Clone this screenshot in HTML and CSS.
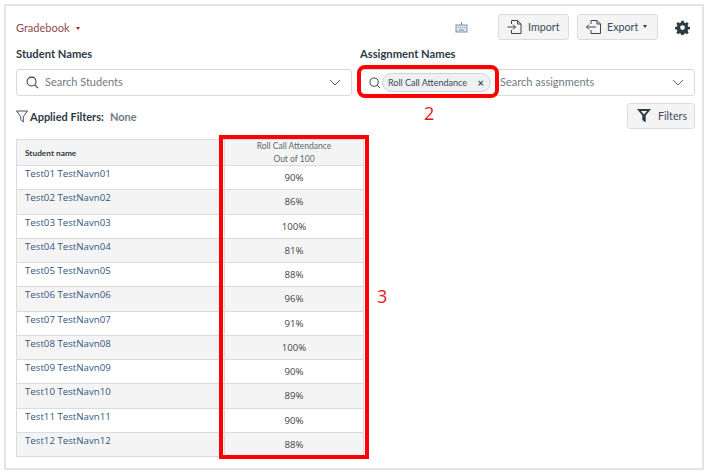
FILE: index.html
```html
<!DOCTYPE html>
<html lang="en">
<head>
    <meta charset="UTF-8">
    <title>Gradebook</title>
    <link rel="stylesheet" href="styles.css">
</head>
<body>

    <div class="frame">
        <!-- Top bar -->
        <div class="topbar">
            <div class="crumb">Gradebook <span class="caret"></span></div>
            <div class="actions">
                <svg class="kbd-icon" width="13" height="13" viewBox="0 0 13 13" fill="none" stroke="#7d92ab" stroke-width="1">
                    <rect x="1" y="4" width="11" height="7" fill="#dfe6ee"/>
                    <path d="M6.5 4V1M3 6.5h1M5 6.5h1M7 6.5h1M9 6.5h1M4 9h5"/>
                </svg>
                <div class="btn btn-import">
                    <svg width="16" height="16" viewBox="0 0 16 16" fill="none" stroke="#444" stroke-width="1">
                        <path d="M4.5 5V1.5h6l3.5 3.5v9.500H4.500V11M10.500 1.500V5H14M.5 8h8M6 5.500 8.500 8 6 10.500"/>
                    </svg>
                    <span>Import</span>
                </div>
                <div class="btn btn-export">
                    <svg width="16" height="16" viewBox="0 0 16 16" fill="none" stroke="#444" stroke-width="1">
                        <path d="M5 5V1.500h6l3.500 3.500v9.500H5V11M11 1.500V5h3.500M10 8H.5M3 5.500.5 8 3 10.500"/>
                    </svg>
                    <span>Export</span>
                    <span class="caret caret-dark"></span>
                </div>
                <svg class="gear" width="15" height="15" viewBox="0 0 24 24" fill="#2d3b45">
                    <path fill-rule="evenodd" d="M13.900 1l.5 3a8.500 8.500 0 0 1 2.300 1l2.500-1.800 2.700 2.700-1.800 2.500a8.500 8.500 0 0 1 1 2.300l3 .5v3.600l-3 .5a8.500 8.500 0 0 1-1 2.300l1.800 2.500-2.700 2.700-2.500-1.800a8.500 8.500 0 0 1-2.300 1l-.5 3h-3.800l-.5-3a8.500 8.500 0 0 1-2.300-1l-2.500 1.800-2.700-2.700 1.800-2.500a8.500 8.500 0 0 1-1-2.300l-3-.5v-3.600l3-.5a8.500 8.500 0 0 1 1-2.300L2.100 5.900l2.700-2.700 2.500 1.800a8.500 8.500 0 0 1 2.300-1l.5-3zM12 8.200a3.800 3.800 0 1 0 0 7.600 3.800 3.800 0 0 0 0-7.600z"/>
                </svg>
            </div>
        </div>

        <!-- Filters -->
        <div class="filter-row">
            <div class="filter">
                <div class="filter-label">Student Names</div>
                <div class="select">
                    <svg class="search" width="13" height="13" viewBox="0 0 14 14" fill="none" stroke="#2d3b45" stroke-width="1.100">
                        <circle cx="6" cy="6" r="4.800"/><path d="M9.500 9.500 13 13"/>
                    </svg>
                    <span class="placeholder">Search Students</span>
                    <svg class="chevron" width="12" height="7" viewBox="0 0 12 7" fill="none" stroke="#556572" stroke-width="1"><path d="M1 1l5 5 5-5"/></svg>
                </div>
            </div>
            <div class="filter">
                <div class="filter-label">Assignment Names</div>
                <div class="select select-tags">
                    <svg class="search" width="12" height="12" viewBox="0 0 14 14" fill="none" stroke="#2d3b45" stroke-width="1.100">
                        <circle cx="6" cy="6" r="4.800"/><path d="M9.500 9.500 13 13"/>
                    </svg>
                    <span class="tag">Roll Call Attendance <b class="tag-x">&times;</b></span>
                    <span class="placeholder">Search assignments</span>
                    <svg class="chevron" width="12" height="7" viewBox="0 0 12 7" fill="none" stroke="#556572" stroke-width="1"><path d="M1 1l5 5 5-5"/></svg>
                </div>
            </div>
        </div>

        <div class="applied-row">
            <div class="applied">
                <svg width="12" height="13" viewBox="0 0 12 13" fill="none" stroke="#2d3b45" stroke-width=".9"><path d="M.5 1h11L7.300 6.500V12L4.700 9.500v-3z"/></svg>
                <strong>Applied Filters:</strong> <span class="none">None</span>
            </div>
            <div class="btn btn-filters">
                <svg width="14" height="15" viewBox="0 0 14 15" fill="#2d3b45"><path fill-rule="evenodd" d="M0 1h14L8.700 7.500V14.500L5.300 12V7.500zM4 3l3 3.500L10 3z"/></svg>
                <span>Filters</span>
            </div>
        </div>

        <!-- Tabela -->
        <div class="table-wrap">
            <table class="grades">
                <thead>
                    <tr>
                        <th class="col-name">Student name</th>
                        <th class="col-grade">Roll Call Attendance<br>Out of 100</th>
                    </tr>
                </thead>
                <tbody>
                    <tr><td><a>Test01 TestNavn01</a></td><td class="grade">90%</td></tr>
                    <tr><td><a>Test02 TestNavn02</a></td><td class="grade">86%</td></tr>
                    <tr><td><a>Test03 TestNavn03</a></td><td class="grade">100%</td></tr>
                    <tr><td><a>Test04 TestNavn04</a></td><td class="grade">81%</td></tr>
                    <tr><td><a>Test05 TestNavn05</a></td><td class="grade">88%</td></tr>
                    <tr><td><a>Test06 TestNavn06</a></td><td class="grade">96%</td></tr>
                    <tr><td><a>Test07 TestNavn07</a></td><td class="grade">91%</td></tr>
                    <tr><td><a>Test08 TestNavn08</a></td><td class="grade">100%</td></tr>
                    <tr><td><a>Test09 TestNavn09</a></td><td class="grade">90%</td></tr>
                    <tr><td><a>Test10 TestNavn10</a></td><td class="grade">89%</td></tr>
                    <tr><td><a>Test11 TestNavn11</a></td><td class="grade">90%</td></tr>
                    <tr><td><a>Test12 TestNavn12</a></td><td class="grade">88%</td></tr>
                </tbody>
            </table>
        </div>

        <!-- Marcações vermelhas por cima da tela -->
        <div class="mark mark-tag"></div>
        <div class="mark-num num-2">2</div>
        <div class="mark mark-col"></div>
        <div class="mark-num num-3">3</div>
    </div>

</body>
</html>
```

FILE: styles.css
```css
/* General */
html, body {
    margin: 0;
    padding: 0;
    background-color: #ffffff;
}

body {
    width: 709px;
    height: 475px;
    overflow: hidden;
    font-family: Lato, "Open Sans", sans-serif;
    color: #2d3b45;
}

.frame {
    position: relative;
    box-sizing: border-box;
    width: 700px;
    height: 466px;
    margin: 4px 0 0 4px;
    padding: 0 7px 0 10px;
    border: 2px solid #e4e4e4;
}

/* Top bar */
.topbar {
    display: flex;
    justify-content: space-between;
    align-items: flex-start;
    box-sizing: border-box;
    height: 39px;
    padding: 8px 0 0 0;
}

.crumb {
    margin-top: 7px;
    font-size: 11px;
    color: #8e4a50;
}

.caret {
    display: inline-block;
    width: 0;
    height: 0;
    margin-left: 4px;
    vertical-align: 2px;
    border-left: 2.5px solid transparent;
    border-right: 2.5px solid transparent;
    border-top: 3px solid #a3262e;
}

.caret-dark {
    margin-left: 0;
    border-top-color: #2d3b45;
}

.actions {
    display: flex;
    align-items: center;
    height: 26px;
}

.kbd-icon {
    margin-right: 30px;
}

.btn {
    display: flex;
    align-items: center;
    box-sizing: border-box;
    height: 26px;
    padding-bottom: 1px;
    border: 1px solid #dadcdd;
    border-radius: 3px;
    background-color: #f4f4f4;
    font-size: 10.7px;
    color: #3b4a55;
}

.btn-import {
    width: 71px;
    gap: 5px;
    padding-left: 8px;
}

.btn-export {
    width: 81px;
    gap: 5px;
    margin-left: 8px;
    padding-left: 8px;
}

.gear {
    margin: 0 5px 0 17px;
}

/* Filters */
.filter-row {
    display: flex;
    gap: 8px;
}

.filter {
    flex: 1;
    min-width: 0;
}

.filter:first-child {
    flex: 0 0 336px;
}

.filter-label {
    box-sizing: border-box;
    height: 24px;
    padding-top: 2px;
    font-size: 11.2px;
    font-weight: bold;
    line-height: 14px;
}

.select {
    display: flex;
    align-items: center;
    box-sizing: border-box;
    height: 27px;
    padding: 0 10px 0 9px;
    border: 1px solid #d7dadc;
    border-radius: 3px;
    background-color: #ffffff;
    font-size: 11px;
}

.select-tags {
    padding-left: 8px;
}

.placeholder {
    margin: 0 0 2px 6px;
    color: #6f7a83;
}

.select-tags .placeholder {
    margin-left: 9px;
}

.chevron {
    margin-left: auto;
}

.tag {
    display: flex;
    align-items: center;
    box-sizing: border-box;
    width: 109px;
    height: 19px;
    margin-left: 1px;
    padding: 0 6px 1px 5px;
    border: 1px solid #cdd2d5;
    border-radius: 10px;
    background-color: #eef0f1;
    font-size: 9px;
    color: #3b4a55;
}

.tag-x {
    margin-left: auto;
    font-size: 11px;
}

.applied-row {
    display: flex;
    justify-content: space-between;
    align-items: center;
    height: 30px;
    margin-top: 5px;
}

.applied {
    display: flex;
    align-items: center;
    gap: 2px;
    font-size: 11px;
}

.none {
    margin-left: 4px;
    font-weight: bold;
    color: #707b84;
}

.btn-filters {
    gap: 7px;
    width: 68px;
    padding-left: 9px;
}

/* Tabela */
.table-wrap {
    margin-top: 8px;
}

.grades {
    width: 348px;
    border-collapse: collapse;
    table-layout: fixed;
    font-size: 10px;
}

.grades th, .grades td {
    box-sizing: border-box;
    padding: 0;
    border: 1px solid #d9dcde;
}

.grades th {
    height: 26px;
    background-color: #f4f4f4;
    font-weight: normal;
}

.col-name {
    width: 208px;
    padding-left: 8px !important;
    text-align: left;
    font-size: 8.3px;
    font-weight: bold !important;
}

.col-grade {
    font-size: 8.5px;
    line-height: 12.5px;
    color: #5e6971;
    text-align: center;
}

.grades td {
    height: 24.25px;
    vertical-align: top;
    padding-left: 8px;
    font-family: "Open Sans", sans-serif;
    font-size: 9.7px;
    line-height: 15px;
}

.grades a {
    color: #34577e;
}

.grades td.grade {
    padding: 4px 0 0 0;
    text-align: center;
    color: #444444;
}

.grades tbody tr:nth-child(even) td {
    background-color: #f4f4f4;
}

/* Marcações */
.mark {
    position: absolute;
    box-sizing: border-box;
    border: 4px solid #fe0000;
}

.mark-tag {
    left: 351px;
    top: 59px;
    width: 142px;
    height: 33px;
    border-radius: 8px;
}

.mark-col {
    left: 213px;
    top: 129px;
    width: 150px;
    height: 324px;
}

.mark-num {
    position: absolute;
    font-family: "Open Sans", sans-serif;
    font-size: 18px;
    line-height: 20px;
    color: #e8141c;
}

.num-2 {
    left: 418px;
    top: 97px;
}

.num-3 {
    left: 371px;
    top: 280px;
}
```
